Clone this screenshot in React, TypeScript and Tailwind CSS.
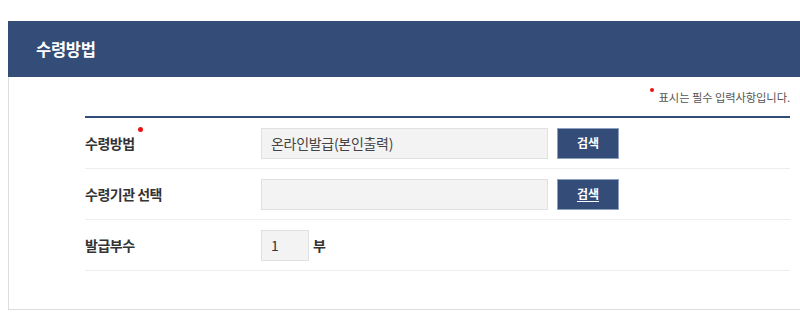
import React from "react";

const font = { fontFamily: '"Noto Sans CJK KR", "Noto Sans", sans-serif' };

function Row({
  label,
  required,
  children,
}: {
  label: string;
  required?: boolean;
  children: React.ReactNode;
}) {
  return (
    <div className="flex items-center h-[51px] border-b border-[#eeeeee]">
      <div className="w-[176px] text-[14px] font-bold text-[#333] tracking-[-0.5px] relative">
        <span className="relative">
          {label}
          {required && (
            <span className="absolute -right-[8px] -top-[6px] w-[5px] h-[5px] rounded-full bg-[#ee1111]" />
          )}
        </span>
      </div>
      <div className="flex items-center">{children}</div>
    </div>
  );
}

function Btn({ underline }: { underline?: boolean }) {
  return (
    <button
      className={
        "ml-[9px] w-[62px] h-[31px] bg-[#344c78] border border-[#8ea0c0] text-white text-[12px] font-bold " +
        (underline ? "underline underline-offset-2" : "")
      }
    >
      검색
    </button>
  );
}

export default function App() {
  return (
    <div className="w-[800px] h-[313px] overflow-hidden bg-white" style={font}>
      <div className="pt-[21px] pl-[8px]">
        <div className="w-[820px]">
          <div className="h-[56px] bg-[#344c78] flex items-center pl-[28px]">
            <h2 className="text-white text-[16.5px] font-bold tracking-[-0.3px]">수령방법</h2>
          </div>
          <div className="border-l border-b border-[#dddddd] h-[233px] pl-[76px] pr-[38px]">
            <div className="flex justify-end items-start pt-[10px] h-[41px] border-b-2 border-[#344c78]">
              <span className="w-[4px] h-[4px] rounded-full bg-[#ee1111] mt-[1px] mr-[5px]" />
              <span className="text-[11.3px] text-[#555] tracking-[-0.1px] mt-[2px]">
                표시는 필수 입력사항입니다.
              </span>
            </div>
            <Row label="수령방법" required>
              <div className="w-[287px] h-[31px] bg-[#f3f3f3] border border-[#e0e0e0] flex items-center px-[9px] text-[14px] text-[#444] tracking-[-0.3px]">
                온라인발급(본인출력)
              </div>
              <Btn />
            </Row>
            <Row label="수령기관 선택">
              <div className="w-[287px] h-[31px] bg-[#f3f3f3] border border-[#e0e0e0]" />
              <Btn underline />
            </Row>
            <Row label="발급부수">
              <div className="w-[48px] h-[31px] bg-[#f3f3f3] border border-[#e0e0e0] flex items-center px-[9px] text-[14px] text-[#333]">
                1
              </div>
              <span className="ml-[4px] text-[14px] font-bold text-[#333]">부</span>
            </Row>
          </div>
        </div>
      </div>
    </div>
  );
}
